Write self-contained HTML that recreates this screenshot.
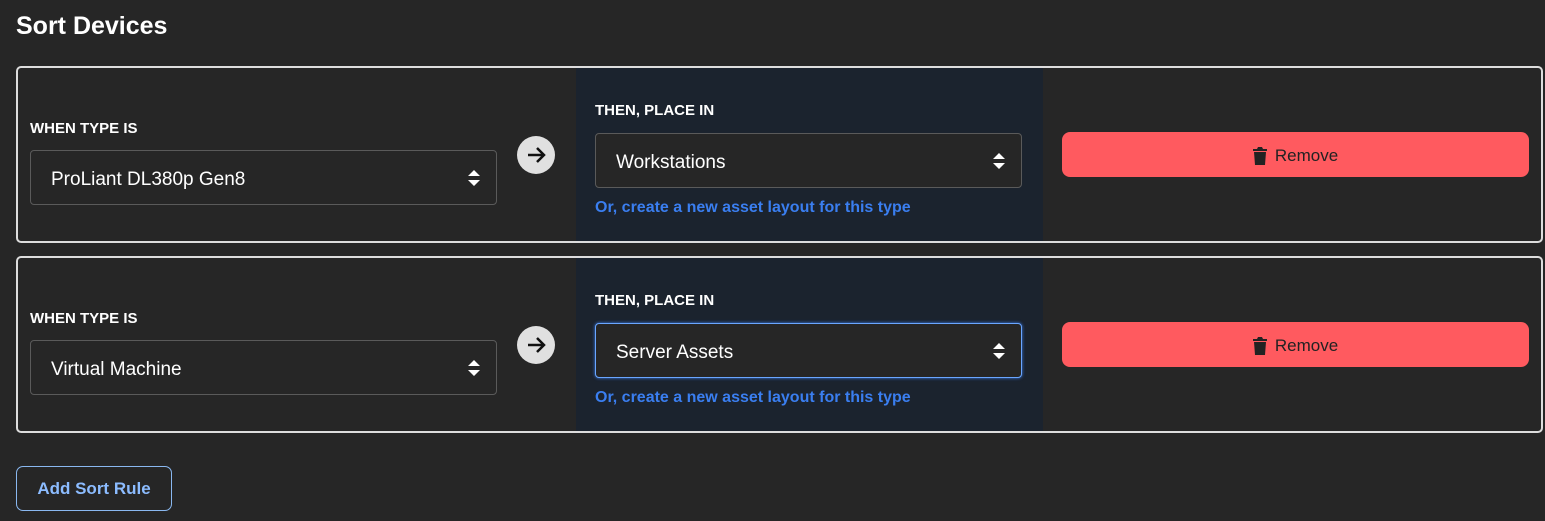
<!DOCTYPE html>
<html><head><style>
body{margin:0;background:#262626;width:1545px;height:521px;overflow:hidden;font-family:"Liberation Sans",sans-serif;color:#fff;position:relative}
.a{position:absolute}
h1{position:absolute;left:16px;top:12px;margin:0;font-size:25px;font-weight:bold}
.card{position:absolute;left:16px;width:1523px;height:173px;border:2px solid #ddd;border-radius:5px;overflow:hidden}
.mid{position:absolute;left:558px;top:0;width:467px;height:173px;background:#1b232e}
.lbl{position:absolute;font-size:15px;font-weight:bold}
.sel{position:absolute;border:1px solid #5a5a5a;border-radius:4px;background:#262626;font-size:19px;box-sizing:border-box;padding-left:20px;padding-top:4px;display:flex;align-items:center}
.sel svg{position:absolute;right:16px;top:50%;margin-top:-9px}
.circ{position:absolute;width:38px;height:38px;border-radius:50%;background:#e0e0e0}
.link{position:absolute;color:#3a7ef0;font-weight:bold;font-size:16px}
.rm{position:absolute;left:1044px;width:467px;height:45px;background:#ff5a5f;border-radius:8px;color:#222;font-size:17px;display:flex;align-items:center;justify-content:center;gap:8px;padding-top:2px;box-sizing:border-box}
</style></head><body>
<h1>Sort Devices</h1>

<div class="card" style="top:66px">
<div class="mid"></div>
<div class="lbl" style="left:12px;top:52px">WHEN TYPE IS</div>
<div class="sel" style="left:12px;top:82px;width:467px;height:55px">ProLiant DL380p Gen8<svg width="12" height="18"><path d="M6 1L12 7H0Z M6 17L12 11H0Z" fill="#fff"/></svg></div>
<div class="circ" style="left:499px;top:68px"><svg width="38" height="38"><path d="M11 19H26M20 12L27 19L20 26" stroke="#111" stroke-width="2.5" fill="none"/></svg></div>
<div class="lbl" style="left:577px;top:34px">THEN, PLACE IN</div>
<div class="sel" style="left:577px;top:65px;width:427px;height:55px">Workstations<svg width="12" height="18"><path d="M6 1L12 7H0Z M6 17L12 11H0Z" fill="#fff"/></svg></div>
<div class="link" style="left:577px;top:131px">Or, create a new asset layout for this type</div>
<div class="rm" style="top:64px"><svg width="14" height="18"><path d="M0 2H4L5 0H9L10 2H14V4H0Z M1 5H13L12 18H2Z" fill="#222"/></svg>Remove</div>
</div>

<div class="card" style="top:256px">
<div class="mid"></div>
<div class="lbl" style="left:12px;top:52px">WHEN TYPE IS</div>
<div class="sel" style="left:12px;top:82px;width:467px;height:55px">Virtual Machine<svg width="12" height="18"><path d="M6 1L12 7H0Z M6 17L12 11H0Z" fill="#fff"/></svg></div>
<div class="circ" style="left:499px;top:68px"><svg width="38" height="38"><path d="M11 19H26M20 12L27 19L20 26" stroke="#111" stroke-width="2.5" fill="none"/></svg></div>
<div class="lbl" style="left:577px;top:34px">THEN, PLACE IN</div>
<div class="sel" style="left:577px;top:65px;width:427px;height:55px;border-color:#6aa6ff;box-shadow:0 0 3px #3a7ef0">Server Assets<svg width="12" height="18"><path d="M6 1L12 7H0Z M6 17L12 11H0Z" fill="#fff"/></svg></div>
<div class="link" style="left:577px;top:131px">Or, create a new asset layout for this type</div>
<div class="rm" style="top:64px"><svg width="14" height="18"><path d="M0 2H4L5 0H9L10 2H14V4H0Z M1 5H13L12 18H2Z" fill="#222"/></svg>Remove</div>
</div>

<div class="a" style="left:16px;top:466px;width:154px;height:43px;border:1px solid #8ab8f0;border-radius:7px;color:#8cbcff;font-weight:bold;font-size:17px;display:flex;align-items:center;justify-content:center">Add Sort Rule</div>
</body></html>
